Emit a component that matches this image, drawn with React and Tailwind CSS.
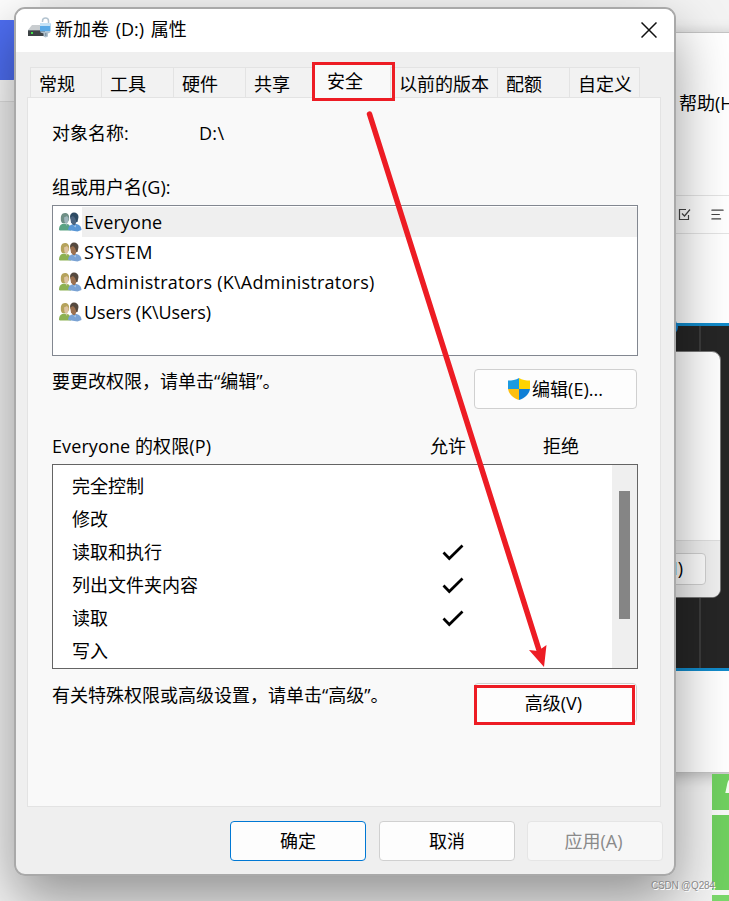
import { AlignLeft } from 'lucide-react';

const TABS = [
  { label: '常规', width: 'w-[71px]' },
  { label: '工具', width: 'w-[72px]' },
  { label: '硬件', width: 'w-[72px]' },
  { label: '共享', width: 'w-[70px]' },
  { label: '安全', width: 'w-[75px]', active: true },
  { label: '以前的版本', width: 'w-[107px]' },
  { label: '配额', width: 'w-[72px]' },
  { label: '自定义', width: 'w-[71px]' },
];

const GROUPS = [
  { name: 'Everyone', selected: true, tracking: 'tracking-[0.1px]' },
  { name: 'SYSTEM', tracking: 'tracking-[0.5px]' },
  { name: 'Administrators (K\\Administrators)', tracking: 'tracking-[0.25px]' },
  { name: 'Users (K\\Users)', tracking: 'tracking-[-0.1px]' },
];

const PERMISSIONS = [
  { name: '完全控制' },
  { name: '修改' },
  { name: '读取和执行', allow: true },
  { name: '列出文件夹内容', allow: true },
  { name: '读取', allow: true },
  { name: '写入' },
];

function DriveIcon() {
  return (
    <svg width="24" height="22" viewBox="0 0 24 22" className="shrink-0">
      <path d="M4 8h11v5H0z" fill="#c9cdd0" />
      <path d="M0 13h17v6H0z" fill="#3d4245" />
      <path d="M0 13h17v1H0z" fill="#6c7276" />
      <rect x="3" y="15" width="2" height="2" fill="#43e04b" />
      <path d="M14.500 5V4a3 3 0 0 1 6 0v3" fill="none" stroke="#b4c4d0" strokeWidth="1.500" />
      <path d="M12 6.500h10.500v8H12z" fill="#5aaae6" />
      <path d="M12 6h10.500v3H12z" fill="#c4e2f6" />
      <path d="M12.500 14.500h9.500v1l-2 1v3l-2.500 1-2-1v-3l-3-1z" fill="#b0c0cc" />
      <path d="M17 16h1.500v3H17z" fill="#8298a8" />
    </svg>
  );
}

function GroupIcon({ selected }) {
  const hair = selected ? '#6f8f86' : '#b5a35c';
  const face = selected ? '#9fb6bd' : '#ddc4a2';
  const shirt = selected ? '#5aa384' : '#8cb152';
  const hair2 = selected ? '#2d4a63' : '#55493f';
  const face2 = selected ? '#4b6480' : '#9a7050';
  const coat = selected ? '#5a97d6' : '#7ba3d4';
  return (
    <svg width="23" height="20" viewBox="0 0 23 20" className="shrink-0">
      <path d="M0 18c0-4 1.500-6 5-6.500l4 .5 3 3v3.500H1z" fill={shirt} />
      <path d="M2 9c-.8-5 .5-8 4-8 3.200 0 4.500 2 4 7l-2 3H3z" fill={hair} />
      <path d="M5 5.500 8 4l1.500 2v3L7.500 12 5.500 10z" fill={face} />
      <path d="M6.500 12h2l-.5 2z" fill={face} />
      <path d="M9 18c.5-4 2-5 5.500-6h3c3 .8 5 2.500 5 6l-4 1.500z" fill={coat} />
      <path d="M11 5c0-3 1.700-4.500 4-4.500S19.500 2 19.500 5l-1 5H13z" fill={hair2} />
      <path d="M11.200 5.500 14 4l2 2 1.500 4-1.500 3h-2L12 10.500z" fill={face2} />
      <path d="m14 13 1.500 1 1.500-1-.5 2.500z" fill="#b9d0ea" />
    </svg>
  );
}

function ShieldIcon() {
  return (
    <svg width="22" height="22" viewBox="0 0 22 22" className="shrink-0">
      <path d="M11 0v11H0V2.500C4 2.500 8 2 11 0z" fill="#1c9be0" />
      <path d="M11 0v11h11V2.500C18 2.500 14 2 11 0z" fill="#ffd400" />
      <path d="M0 11h11v11C5 20 1 16.500 0 11z" fill="#fdbf10" />
      <path d="M22 11H11v11c6-2 10-5.500 11-11z" fill="#0f7fd6" />
    </svg>
  );
}

function CloseIcon() {
  return (
    <svg width="16" height="16" viewBox="0 0 16 16" className="shrink-0">
      <path d="m.5.5 15 15m0-15-15 15" stroke="#111" strokeWidth="1.500" />
    </svg>
  );
}

function CheckMark() {
  return (
    <svg width="22" height="18" viewBox="0 0 22 18" className="shrink-0">
      <path d="m1.500 8.500 5.800 6L20.500 1.500" fill="none" stroke="#000" strokeWidth="2.700" />
    </svg>
  );
}

function Button({ className = '', children }) {
  return (
    <button
      className={`flex h-10 items-center justify-center rounded-[4px] border leading-6 ${className}`}
    >
      {children}
    </button>
  );
}

function Desktop() {
  return (
    <>
      {/* left window edge */}
      <div className="absolute left-0 top-0 h-[102px] w-10 border-b border-[#e2e2e2] bg-[#fdfdfd]" />
      <div className="absolute left-0 top-5 h-[60px] w-[17px] rounded-r-[4px] bg-[#4e6ef2]" />

      {/* editor window */}
      <div className="absolute left-[600px] top-8 flex h-[741px] w-[140px] flex-col border border-[#c4c4c4] bg-white shadow-[0_3px_14px_rgba(0,0,0,0.25)]">
        <div className="h-[162px] pl-[78px] pt-[58px] leading-6 whitespace-nowrap">帮助(H</div>
        <div className="flex h-[39px] items-center gap-[19px] border-y border-[#e4e4e4] pl-[77px] text-[#444]">
          <svg width="13" height="13" viewBox="0 0 13 13" className="shrink-0">
            <path d="M8 1.500H1.500v10h9V7M4 5.500l2.500 2.500L12 1.500" fill="none" stroke="currentColor" strokeWidth="1.200" />
          </svg>
          <AlignLeft size={15} strokeWidth={1.8} className="shrink-0" />
        </div>
        <div className="h-[89px]" />
        <div className="h-[348px] border-y-[3px] border-[#128bcb] bg-[#262626]">
          <div className="ml-[98px] h-full w-[2px] bg-[#3c3c3c]" />
        </div>
      </div>
      <div className="absolute left-[660px] top-[319px] h-4 w-[18px] rounded-full bg-[#1684d2]" />

      {/* nested message box */}
      <div className="absolute left-[600px] top-[351px] flex h-[247px] w-[121px] flex-col overflow-hidden rounded-[9px] border border-[#777] bg-white">
        <div className="h-[188px]" />
        <div className="flex-1 border-t border-[#dfdfdf] bg-[#f0f0f0] pt-3">
          <div className="ml-5 h-8 w-[85px] rounded-[4px] border border-[#d0d0d0] bg-[#fdfdfd] pr-[22px] text-right leading-[28px]">
            I)
          </div>
        </div>
      </div>

      {/* green tiles */}
      <div className="absolute left-[712px] top-[774px] flex w-[17px] flex-col gap-[5px] overflow-hidden bg-[#f8f8f8]">
        <div className="relative h-9 bg-[#70d060]">
          <div className="absolute left-[15px] top-[3px] h-4 w-2 -skew-x-12 rounded-tl-[6px] bg-[#f4fff2]" />
        </div>
        <div className="h-[75px] bg-[#70d060]" />
        <div className="h-3 bg-[#7bd86c]" />
      </div>
    </>
  );
}

function PropertiesDialog() {
  return (
    <div className="absolute left-[14px] top-[7px] flex h-[869px] w-[662px] flex-col overflow-hidden rounded-[11px] border-2 border-[#a9a9a9] bg-[#efefef] bg-clip-padding">
      {/* Title bar */}
      <header className="flex h-[43px] shrink-0 items-center bg-white pl-3 pr-[17px]">
        <div className="-mt-[5px]">
          <DriveIcon />
        </div>
        <h1 className="-mt-[3px] ml-[3px] flex-1 leading-6 [word-spacing:2px]">新加卷 (D:) 属性</h1>
        <div className="-mt-[2px]">
          <CloseIcon />
        </div>
      </header>

      {/* Tabs */}
      <nav className="mt-[15px] flex h-[30px] shrink-0 items-start pl-[14px]">
        {TABS.map(({ label, width, active }) => (
          <div
            key={label}
            className={`${width} whitespace-nowrap leading-6 ${
              active
                ? 'relative z-10 -mt-[3px] h-[35px] bg-[#f9f9f9] pl-[12px] pt-[5px]'
                : 'h-[30px] border-l border-t border-[#e3e3e3] bg-[#f2f2f2] pl-[8px] pt-[4px] last:border-r'
            }`}
          >
            {label}
          </div>
        ))}
      </nav>

      {/* Tab page */}
      <main className="ml-[11px] flex h-[710px] w-[634px] shrink-0 flex-col border border-[#e3e3e3] bg-[#f9f9f9] pl-6 pr-[22px]">
        <div className="mt-[23px] flex leading-6">
          <span className="w-[147px]">对象名称:</span>
          <span className="tracking-[0.3px]">D:\</span>
        </div>

        <div className="mt-[30px] leading-6">组或用户名(G):</div>
        <ul className="mt-[6px] h-[151px] w-[586px] border border-[#828790] bg-white pt-px">
          {GROUPS.map(({ name, selected, tracking }) => (
            <li key={name} className="flex h-[30px] items-center pl-[6px]">
              <GroupIcon selected={selected} />
              <span
                className={`flex h-full flex-1 items-center pl-[2px] ${tracking} ${selected ? 'bg-[#efefef]' : ''}`}
              >
                {name}
              </span>
            </li>
          ))}
        </ul>

        <div className="mt-[13px] flex h-10 justify-between">
          <p className="leading-6">要更改权限，请单击“编辑”。</p>
          <Button className="mr-px w-[163px] border-[#d0d0d0] bg-[#fdfdfd]">
            <ShieldIcon />
            <span className="ml-[2px]">编辑(E)...</span>
          </Button>
        </div>

        <div className="mt-[25px] flex leading-6">
          <span className="w-[378px] tracking-[0.1px]">Everyone 的权限(P)</span>
          <span className="w-[113px]">允许</span>
          <span>拒绝</span>
        </div>
        <div className="mt-[6px] flex h-[205px] w-[586px] border border-[#646464] bg-white">
          <ul className="flex-1 pl-[19px] pt-[5px]">
            {PERMISSIONS.map(({ name, allow }) => (
              <li key={name} className="flex h-[33px] items-center">
                <span className="w-[370px]">{name}</span>
                {allow && <CheckMark />}
              </li>
            ))}
          </ul>
          <div className="w-[25px] bg-[#efefef] pl-[7px] pt-[26px]">
            <div className="h-32 w-[11px] bg-[#858585]" />
          </div>
        </div>

        <div className="mt-[14px] flex h-10 justify-between">
          <p className="leading-6">有关特殊权限或高级设置，请单击“高级”。</p>
          <Button className="mr-px w-[163px] border-[#d0d0d0] bg-[#fdfdfd] pr-[4px]">高级(V)</Button>
        </div>
      </main>

      {/* Footer */}
      <footer className="mt-[14px] flex justify-end gap-3 pr-[11px]">
        <Button className="mr-px w-[136px] border-[#0078d4] bg-[#fdfdfd]">确定</Button>
        <Button className="w-[136px] border-[#d0d0d0] bg-[#fdfdfd]">取消</Button>
        <Button className="w-[136px] border-[#e5e5e5] bg-[#f7f7f7] pr-[3px] text-[#8a8a8a]">应用(A)</Button>
      </footer>
    </div>
  );
}

function Annotations() {
  return (
    <>
      <div className="absolute left-[312px] top-[62px] z-20 h-[39px] w-[83px] border-[3px] border-[#ed1c24]" />
      <div className="absolute left-[474px] top-[685px] z-20 h-10 w-[161px] border-[3px] border-[#ed1c24]" />
      <svg className="absolute left-0 top-0 z-20" width="729" height="901" viewBox="0 0 729 901">
        <path d="M369.500 114 539 650" stroke="#ed1c24" strokeWidth="5.500" strokeLinecap="round" />
        <path d="m544 667-15-17 9 1 8.500-6z" fill="#ed1c24" />
      </svg>
    </>
  );
}

export default function App() {
  return (
    <div className="relative h-[901px] w-[729px] overflow-hidden bg-[#f3f3f3] font-['Open_Sans','Noto_Sans_CJK_SC',sans-serif] text-[18px] text-black">
      <Desktop />
      <div className="absolute left-[14px] top-[7px] h-[869px] w-[662px] rounded-[11px] shadow-[0_24px_56px_rgba(0,0,0,0.4)]" />
      <PropertiesDialog />
      <Annotations />
      <div className="absolute left-[651px] top-[879px] z-30 font-['Liberation_Sans'] text-[10px] leading-[14px] tracking-[-0.2px] text-[#8a8a8a] [text-shadow:1px_1px_0_#fff]">
        CSDN @Q284
      </div>
    </div>
  );
}
